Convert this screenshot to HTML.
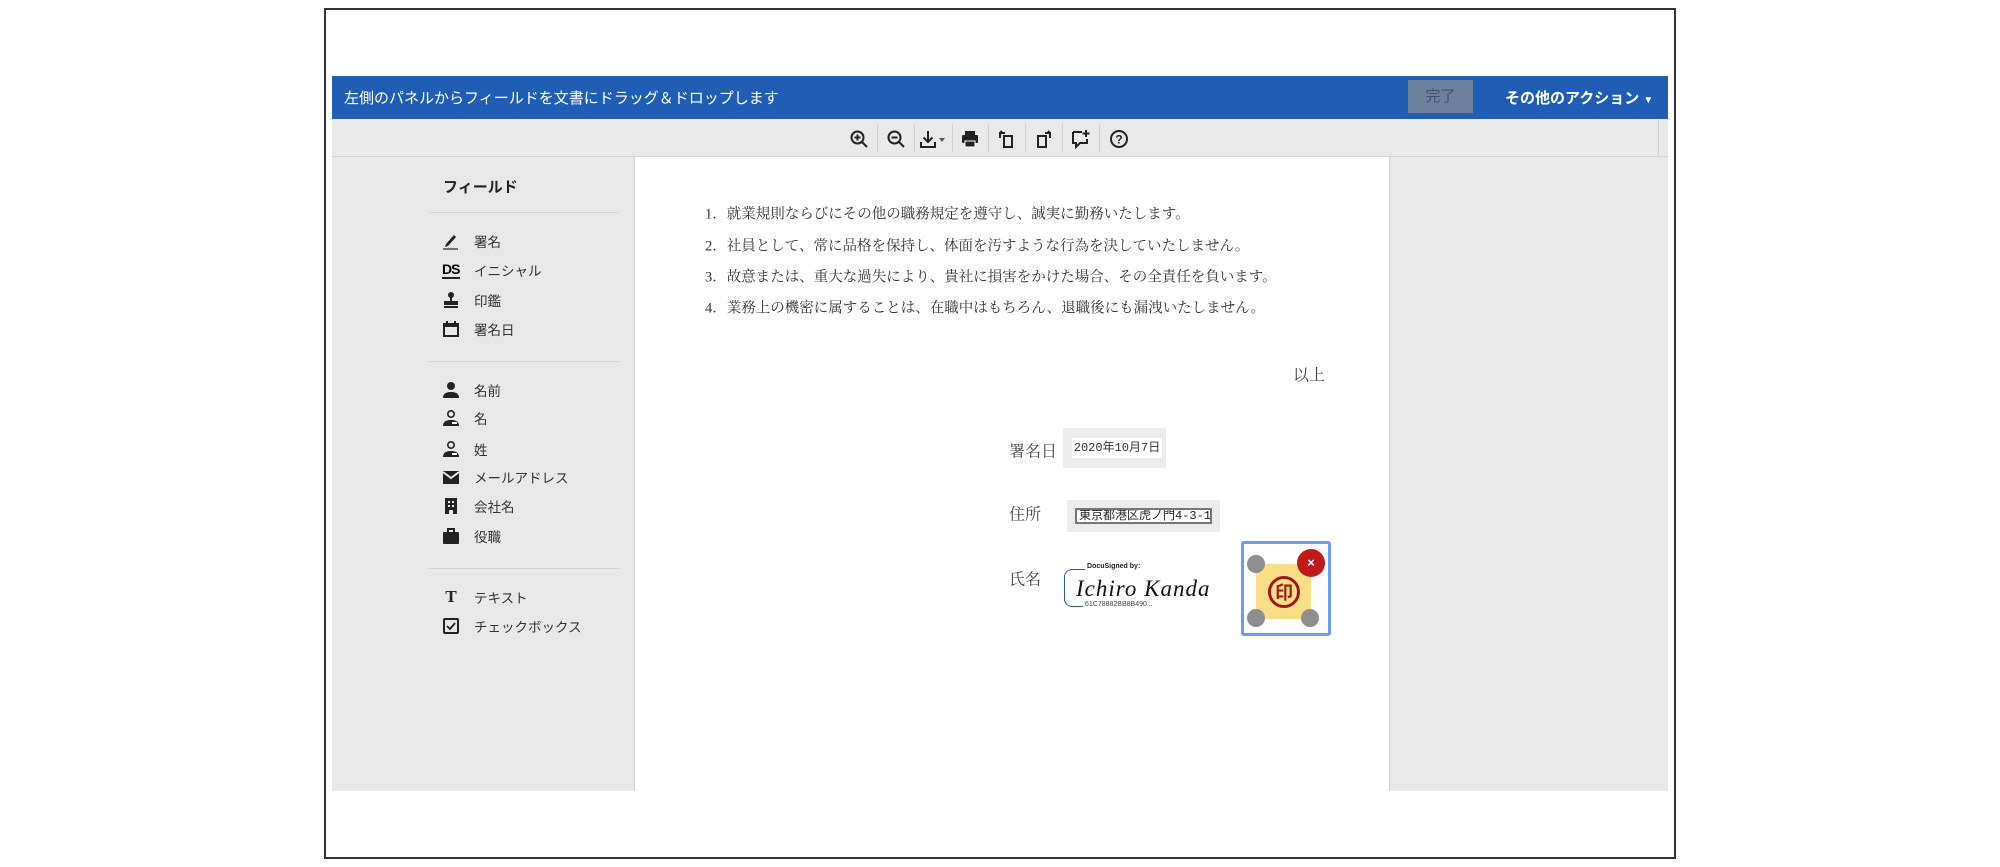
<!DOCTYPE html>
<html><head><meta charset="utf-8"><style>
*{margin:0;padding:0;box-sizing:border-box}
body{width:2000px;height:867px;background:#fff;position:relative;overflow:hidden;font-family:"Liberation Sans","Noto Sans CJK JP",sans-serif}
.a{position:absolute}
.frame{left:324px;top:8px;width:1352px;height:851px;border:2px solid #333}
.bar{left:332px;top:76px;width:1336px;height:43px;background:#1f5eb4;color:#fff}
.tool{left:332px;top:119px;width:1336px;height:38px;background:#e9e9e9;border-bottom:1px solid #d6d6d6}
.gray{left:332px;top:157px;width:1336px;height:634px;background:#e8e8e8}
.doc{left:634px;top:157px;width:756px;height:634px;background:#fff;border-left:1px solid #d0d0d0;border-right:1px solid #d0d0d0}
.it{position:absolute;left:474px;font-size:13.5px;color:#333;transform:translateY(-50%)}
.ic{position:absolute;left:442px;width:18px;height:18px;transform:translateY(-50%)}
.hr{position:absolute;left:429px;width:190px;height:1px;background:#d4d4d4}
.dl{position:absolute;left:705px;font-family:"Liberation Serif","Noto Serif CJK SC",serif;font-size:14.5px;color:#333;letter-spacing:0;transform:translateY(-50%);white-space:nowrap}
.lab{position:absolute;font-family:"Liberation Serif","Noto Serif CJK SC",serif;font-size:16px;color:#444;transform:translateY(-50%)}
.tb{position:absolute;top:129px;width:20px;height:20px}
.sep{position:absolute;top:124px;width:1px;height:28px;background:#d0d0d0}
</style></head><body>
<div class="a frame"></div>
<div class="a bar">
 <div class="a" style="left:12px;top:11px;font-size:15px">左側のパネルからフィールドを文書にドラッグ＆ドロップします</div>
 <div class="a" style="left:1076px;top:4px;width:65px;height:33px;background:#6b819c;color:#3d536f;font-size:15px;text-align:center;line-height:33px">完了</div>
 <div class="a" style="left:1173px;top:11px;font-size:15px;font-weight:bold">その他のアクション <span style="font-size:10px">▼</span></div>
</div>
<div class="a tool"><div class="a" style="left:1326px;top:0;width:1px;height:38px;background:#d0d0d0"></div></div>
<svg class="tb" style="left:849px" viewBox="0 0 20 20"><circle cx="8.5" cy="8.5" r="6" fill="none" stroke="#222" stroke-width="2"/><path d="M13 13l5 5M8.5 5.5v6M5.5 8.5h6" stroke="#222" stroke-width="2"/></svg>
<div class="sep" style="left:877px"></div>
<svg class="tb" style="left:886px" viewBox="0 0 20 20"><circle cx="8.5" cy="8.5" r="6" fill="none" stroke="#222" stroke-width="2"/><path d="M13 13l5 5M5.5 8.5h6" stroke="#222" stroke-width="2"/></svg>
<div class="sep" style="left:914px"></div>
<svg class="tb" style="left:919px;width:30px" viewBox="0 0 30 20"><path d="M9 2v11M4.5 8.5 9 13l4.5-4.5M2 13v5h14v-5" fill="none" stroke="#222" stroke-width="2"/><path d="M20 9h6l-3 4z" fill="#555"/></svg>
<div class="sep" style="left:952px"></div>
<svg class="tb" style="left:960px" viewBox="0 0 20 20"><rect x="5" y="2" width="10" height="4" fill="#222"/><rect x="2" y="6" width="16" height="8" rx="1" fill="#222"/><rect x="5" y="12" width="10" height="6" fill="#222" stroke="#fff" stroke-width="1"/></svg>
<div class="sep" style="left:988px"></div>
<svg class="tb" style="left:997px" viewBox="0 0 20 20"><rect x="7" y="7" width="8" height="11" fill="none" stroke="#222" stroke-width="2"/><path d="M3 9V4h5M3 4l2-2" fill="none" stroke="#222" stroke-width="2"/></svg>
<div class="sep" style="left:1025px"></div>
<svg class="tb" style="left:1034px" viewBox="0 0 20 20"><rect x="4" y="7" width="8" height="11" fill="none" stroke="#222" stroke-width="2"/><path d="M16 9V4h-5M16 4l-2-2" fill="none" stroke="#222" stroke-width="2"/></svg>
<div class="sep" style="left:1062px"></div>
<svg class="tb" style="left:1071px" viewBox="0 0 20 20"><path d="M2 3h9M2 3v11h3v4l4-4h7v-4" fill="none" stroke="#222" stroke-width="2"/><path d="M15 1v7M11.5 4.5h7" stroke="#222" stroke-width="2"/></svg>
<div class="sep" style="left:1099px"></div>
<svg class="tb" style="left:1109px" viewBox="0 0 20 20"><circle cx="10" cy="10" r="8" fill="none" stroke="#222" stroke-width="2"/><text x="10" y="14.5" font-size="12" font-weight="bold" text-anchor="middle" font-family="Liberation Sans" fill="#222">?</text></svg>

<div class="a gray"></div>
<div class="a doc"></div>

<div class="a" style="left:443px;top:176px;font-size:15px;font-weight:bold;color:#222">フィールド</div>
<div class="hr" style="top:212px"></div>
<svg class="ic" style="top:241px" viewBox="0 0 18 18"><path d="M4 12l8-9 2 2-8 9-3 1z" fill="#222"/><path d="M1 17h15" stroke="#222" stroke-width="1.2"/></svg><div class="it" style="top:241px">署名</div>
<div class="ic" style="top:270px;font:bold 14px 'Liberation Sans';line-height:16px;border-bottom:2px solid #222;height:18px;width:18px;letter-spacing:-1px">DS</div><div class="it" style="top:270px">イニシャル</div>
<svg class="ic" style="top:300px" viewBox="0 0 18 18"><circle cx="9" cy="4" r="3" fill="#222"/><rect x="8" y="6" width="2" height="4" fill="#222"/><rect x="2" y="10" width="14" height="4" fill="#222"/><rect x="2" y="15" width="14" height="2" fill="#222"/></svg><div class="it" style="top:300px">印鑑</div>
<svg class="ic" style="top:329px" viewBox="0 0 18 18"><rect x="2" y="4" width="14" height="12" fill="none" stroke="#222" stroke-width="2"/><rect x="2" y="4" width="14" height="3" fill="#222"/><path d="M5 1v4M13 1v4" stroke="#222" stroke-width="2"/></svg><div class="it" style="top:329px">署名日</div>
<div class="hr" style="top:361px"></div>
<svg class="ic" style="top:390px" viewBox="0 0 18 18"><circle cx="9" cy="5" r="4" fill="#222"/><path d="M1 17c0-5 4-6 8-6s8 1 8 6z" fill="#222"/></svg><div class="it" style="top:390px">名前</div>
<svg class="ic" style="top:418px" viewBox="0 0 18 18"><circle cx="9" cy="5" r="3.2" fill="none" stroke="#222" stroke-width="1.6"/><path d="M1 17c0-5 4-6 8-6s8 1 8 6z" fill="#222"/><path d="M10 14h5" stroke="#fff" stroke-width="2"/></svg><div class="it" style="top:418px">名</div>
<svg class="ic" style="top:449px" viewBox="0 0 18 18"><circle cx="9" cy="5" r="3.2" fill="none" stroke="#222" stroke-width="1.6"/><path d="M1 17c0-5 4-6 8-6s8 1 8 6z" fill="#222"/><path d="M10 14h5" stroke="#fff" stroke-width="2"/></svg><div class="it" style="top:449px">姓</div>
<svg class="ic" style="top:477px" viewBox="0 0 18 18"><rect x="1" y="3" width="16" height="13" fill="#222"/><path d="M1 4l8 6 8-6" fill="none" stroke="#e8e8e8" stroke-width="2"/></svg><div class="it" style="top:477px">メールアドレス</div>
<svg class="ic" style="top:506px" viewBox="0 0 18 18"><path d="M3 1h12v16h-4v-4H7v4H3z" fill="#222"/><path d="M6 4h2v2H6zM10 4h2v2h-2zM6 8h2v2H6zM10 8h2v2h-2z" fill="#e8e8e8"/></svg><div class="it" style="top:506px">会社名</div>
<svg class="ic" style="top:536px" viewBox="0 0 18 18"><path d="M6 5V2h6v3" fill="none" stroke="#222" stroke-width="2"/><rect x="1" y="5" width="16" height="12" rx="1" fill="#222"/></svg><div class="it" style="top:536px">役職</div>
<div class="hr" style="top:568px"></div>
<div class="ic" style="top:597px;font:bold 17px 'Liberation Serif';text-align:center;color:#222;line-height:18px">T</div><div class="it" style="top:597px">テキスト</div>
<svg class="ic" style="top:626px" viewBox="0 0 18 18"><rect x="2" y="2" width="14" height="14" rx="1" fill="none" stroke="#222" stroke-width="2"/><path d="M5 9l3 3 5-6" fill="none" stroke="#222" stroke-width="1.8"/></svg><div class="it" style="top:626px">チェックボックス</div>

<div class="dl" style="top:213px">1．就業規則ならびにその他の職務規定を遵守し、誠実に勤務いたします。</div>
<div class="dl" style="top:245px">2．社員として、常に品格を保持し、体面を汚すような行為を決していたしません。</div>
<div class="dl" style="top:276px">3．故意または、重大な過失により、貴社に損害をかけた場合、その全責任を負います。</div>
<div class="dl" style="top:307px">4．業務上の機密に属することは、在職中はもちろん、退職後にも漏洩いたしません。</div>
<div class="lab" style="left:1293px;top:374px">以上</div>

<div class="lab" style="left:1009px;top:450px">署名日</div>
<div class="a" style="left:1063px;top:428px;width:103px;height:40px;background:#ececec"></div>
<div class="a" style="left:1072px;top:438px;width:90px;height:20px;background:#fff;font:12px 'Liberation Mono','Noto Sans CJK JP',monospace;color:#333;line-height:20px;text-align:center">2020年10月7日</div>
<div class="lab" style="left:1009px;top:513px">住所</div>
<div class="a" style="left:1067px;top:500px;width:153px;height:32px;background:#ececec"></div>
<div class="a" style="left:1075px;top:508px;width:137px;height:16px;background:#fff;border:2px solid #777;font:12px 'Liberation Mono','Noto Sans CJK JP',monospace;color:#222;line-height:12px;padding-left:2px;white-space:nowrap;overflow:hidden">東京都港区虎ノ門4-3-1</div>
<div class="lab" style="left:1009px;top:578px">氏名</div>
<div class="a" style="left:1064px;top:569px;width:40px;height:38px;border:1.5px solid #2a5aa8;border-right:none;border-radius:8px 0 0 8px"></div>
<div class="a" style="left:1085px;top:563px;font:bold 7px 'Liberation Sans';color:#222;background:#fff;padding:0 2px">DocuSigned by:</div>
<div class="a" style="left:1076px;top:576px;font:italic 23px 'Liberation Serif',serif;color:#111;letter-spacing:1px">Ichiro Kanda</div>
<div class="a" style="left:1083px;top:601px;font:7px 'Liberation Sans';color:#444;background:#fff;padding:0 2px">61C78882BB8B490...</div>

<div class="a" style="left:1241px;top:541px;width:90px;height:95px;border:3px solid #6a9ef0;border-radius:3px"></div>
<div class="a" style="left:1256px;top:564px;width:55px;height:55px;background:#f9de86"></div>
<div class="a" style="left:1268px;top:576px;width:32px;height:32px;border:3px solid #9b1b1b;border-radius:50%;color:#9b1b1b;font:bold 18px 'Noto Sans CJK JP',sans-serif;text-align:center;line-height:26px">印</div>
<div class="a" style="left:1247px;top:555px;width:18px;height:18px;border-radius:50%;background:#8e8e8e"></div>
<div class="a" style="left:1247px;top:609px;width:18px;height:18px;border-radius:50%;background:#8e8e8e"></div>
<div class="a" style="left:1301px;top:609px;width:18px;height:18px;border-radius:50%;background:#8e8e8e"></div>
<div class="a" style="left:1297px;top:549px;width:28px;height:28px;border-radius:50%;background:#c0191a;color:#fff;font:bold 13px 'Liberation Sans';text-align:center;line-height:28px">×</div>
</body></html>
